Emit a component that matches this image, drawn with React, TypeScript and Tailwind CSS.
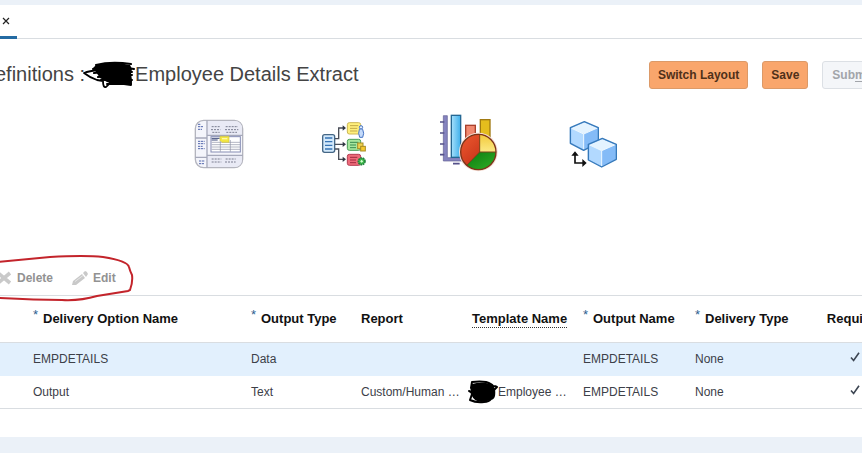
import React, { useState } from 'react';

const actions = [
  { name: 'Layout', icon: <LayoutIcon /> },
  { name: 'Hierarchy', icon: <HierarchyIcon /> },
  { name: 'Reports', icon: <ChartIcon /> },
  { name: 'Objects', icon: <CubesIcon /> },
];

const columns = [
  { name: 'Delivery Option Name', required: true, width: 'w-[218px]' },
  { name: 'Output Type', required: true, width: 'w-[110px]' },
  { name: 'Report', required: false, width: 'w-[111px]' },
  { name: 'Template Name', required: false, width: 'w-[111px]' },
  { name: 'Output Name', required: true, width: 'w-[112px]' },
  { name: 'Delivery Type', required: true, width: 'w-[112px]' },
];

const rows = [
  { option: 'EMPDETAILS', type: 'Data', report: '', template: '', output: 'EMPDETAILS', delivery: 'None' },
  { option: 'Output', type: 'Text', report: 'Custom/Human …', template: 'Employee …', output: 'EMPDETAILS', delivery: 'None' },
];

function LayoutIcon() {
  return (
    <svg viewBox="0 0 210 210" className="h-[70px] w-[70px]" aria-hidden="true">
      <rect x="31" y="31" width="142" height="142" rx="25" fill="#f4f5fb" stroke="#b4b5be" strokeWidth="4" />
      <path d="M68 33h80q23 0 23 24v17H68z" fill="#e9eaf5" />
      <path d="M68 138h103v10q0 23-23 23H68z" fill="#e9eaf5" />
      <path d="M66 31V173M31 84H66M31 142H66M66 76H173M66 136H173" stroke="#a5a8ba" strokeWidth="4" fill="none" />
      <path d="M39 43h9M39 50h15M39 58h12M39 94h20M39 101h20M39 109h14M39 116h20M42 153h18M42 161h15" stroke="#5468ad" strokeWidth="3" strokeDasharray="7 2" />
      <path d="M80 50h26M78 59h28M82 67h22M122 50h37M120 59h40M124 67h32" stroke="#7a7d90" strokeWidth="3" strokeDasharray="6 3" />
      <path d="M80 147h29M80 156h29M122 147h30M120 156h32" stroke="#7a7d90" strokeWidth="3" strokeDasharray="6 3" />
      <rect x="78" y="80" width="88" height="46" fill="#fff" stroke="#858cb4" strokeWidth="3" />
      <path d="M80 97H165M80 104H165M80 111H165M80 118H165M106 90V125M136 90V125" stroke="#8d91a4" strokeWidth="2" />
      <path d="M80 85h24M80 90h18" stroke="#3b4878" strokeWidth="3" />
      <path d="M105 79h27v18h-21l-6-6z" fill="#f3e642" stroke="#d0c545" strokeWidth="2" />
      <path d="M111 86h16" stroke="#fff9a8" strokeWidth="4" />
    </svg>
  );
}

function HierarchyIcon() {
  return (
    <svg viewBox="0 0 210 210" className="h-[70px] w-[70px]" aria-hidden="true">
      <rect x="38" y="74" width="36" height="53" rx="6" fill="#d3e9fb" stroke="#456786" strokeWidth="4" />
      <path d="M45 84h22M45 95h22M45 106h22M45 117h22" stroke="#3673b5" strokeWidth="4" />
      <path d="M75 86h11V54h15M75 103h26M75 117h11v31h15" fill="none" stroke="#4a4e58" strokeWidth="4" />
      <path d="M98 46l10 8-10 8zM98 95l10 8-10 8zM98 140l10 8-10 8z" fill="#303642" />
      <rect x="112" y="38" width="40" height="34" rx="6" fill="#fff07c" stroke="#ccb654" strokeWidth="3" />
      <path d="M120 47h25M120 55h22M120 63h22" stroke="#c2a846" strokeWidth="3" />
      <rect x="112" y="88" width="40" height="33" rx="6" fill="#a7e69e" stroke="#479e57" strokeWidth="3" />
      <path d="M120 97h25M120 105h18M120 113h18" stroke="#398b51" strokeWidth="3" />
      <rect x="112" y="133" width="40" height="33" rx="6" fill="#ee6a7a" stroke="#b53c51" strokeWidth="3" />
      <path d="M120 142h22M120 150h18M120 158h18" stroke="#a22c41" strokeWidth="3" />
      <path d="M148 58q5-5 10 0l3 12-3 12h-9l-3-12z" fill="#c4dafa" stroke="#4574c4" strokeWidth="3" />
      <circle cx="153" cy="52" r="5" fill="#e6eefb" stroke="#4574c4" strokeWidth="3" />
      <rect x="143" y="99" width="16" height="17" fill="#efd250" stroke="#a78d24" strokeWidth="3" />
      <rect x="152" y="109" width="14" height="14" fill="#f6c92e" stroke="#a78d24" strokeWidth="3" />
      <circle cx="155" cy="154" r="10" fill="#3fb84b" stroke="#21823d" strokeWidth="5" strokeDasharray="5 2" />
      <path d="M151 154h8M155 150v8" stroke="#d8ffd4" strokeWidth="3" />
    </svg>
  );
}

function ChartIcon() {
  return (
    <svg viewBox="0 0 240 225" className="h-[75px] w-20" aria-hidden="true">
      <defs>
        <linearGradient id="bar-blue">
          <stop offset="0" stopColor="#a6e0fb" />
          <stop offset="1" stopColor="#3eafeb" />
        </linearGradient>
        <linearGradient id="pie-red" x2="1" y2="1">
          <stop offset="0" stopColor="#ee5a30" />
          <stop offset="1" stopColor="#b4200e" />
        </linearGradient>
        <linearGradient id="pie-green" x2="1" y2="1">
          <stop offset="0" stopColor="#0b7a12" />
          <stop offset="1" stopColor="#30b024" />
        </linearGradient>
        <linearGradient id="pie-yellow" x2="0" y2="1">
          <stop offset="0" stopColor="#f3c93a" />
          <stop offset="1" stopColor="#fbe985" />
        </linearGradient>
      </defs>
      <path d="M40 32h12v126h44v10H40z" fill="#8583bf" stroke="#605d91" strokeWidth="2" />
      <path d="M30 51h13M30 84h13M30 117h13M30 149h13M69 176h20" stroke="#55518a" strokeWidth="5" />
      <rect x="64" y="31" width="28" height="126" fill="url(#bar-blue)" stroke="#246793" strokeWidth="4" />
      <rect x="107" y="61" width="29" height="60" fill="#f18970" stroke="#a9402c" strokeWidth="4" />
      <rect x="151" y="44" width="29" height="80" fill="#e5bd1d" stroke="#a17a12" strokeWidth="4" />
      <circle cx="145" cy="141" r="58" fill="#f5ded5" />
      <circle cx="145" cy="141" r="53" fill="url(#pie-red)" />
      <path d="M149 141V88A53 53 0 0 1 198 141z" fill="url(#pie-yellow)" />
      <path d="M149 141H198A53 53 0 0 1 110 181z" fill="url(#pie-green)" />
      <path d="M149 88v53h49M149 141l-39 40" fill="none" stroke="#7c4119" strokeWidth="3" />
      <circle cx="145" cy="141" r="53" fill="none" stroke="#7b3418" strokeWidth="4" />
    </svg>
  );
}

function Cube() {
  return (
    <>
      <path d="M0 18L42 0l42 18v45L40 86 0 65z" fill="#91c3fa" />
      <path d="M3 19L42 2l39 17-41 18z" fill="#e4f3ff" />
      <path d="M3 20l37 17v46L3 64z" fill="#b2d9ff" />
      <path d="M40 37l41-18v43L40 83z" fill="#84bbf7" />
      <path d="M4 20l36 17 41-18M40 37v46" fill="none" stroke="#f0f9ff" strokeWidth="3" />
      <path d="M0 18L42 0l42 18v45L40 86 0 65z" fill="none" stroke="#3679ba" strokeWidth="4" strokeLinejoin="round" />
    </>
  );
}

function CubesIcon() {
  return (
    <svg viewBox="0 0 210 210" className="h-[70px] w-[70px]" aria-hidden="true">
      <g transform="translate(31 35)"><Cube /></g>
      <g transform="translate(85 85)"><Cube /></g>
      <path d="M45 133v26h25" fill="none" stroke="#111" strokeWidth="5" />
      <path d="M34 137l11-13 11 13zM67 147l13 12-13 12z" fill="#111" />
    </svg>
  );
}

const CheckIcon = () => (
  <svg viewBox="0 0 10 10" className="mx-auto mb-1 h-[10px] w-[10px]" role="img" aria-label="Yes">
    <path d="M1 5.5L3.6 8.5 9 .8" fill="none" stroke="#3c4552" strokeWidth="1.6" />
  </svg>
);

const TitleScribble = () => (
  <svg viewBox="0 0 54 28" className="-ml-1 h-7 w-[54px] shrink-0" aria-hidden="true">
    <path d="M15 5q10-3 23-2l11 2 2 4-1 5 1 6-1 4H34l-8-2-7-4-4-6-3-4z" fill="#000" />
    <path d="M18 10Q8 11 3 13q5 4 13 7l6 1q0 7 3 6 3-2 4-5l21 3v-5" fill="none" stroke="#000" strokeWidth="1.8" strokeLinejoin="round" />
    <path
      d="M15 5Q30 1 50 4M12 9q20-4 41 0M13 13q20-3 38-1M17 17q18-3 34-2M20 20q15-1 31 0M26 24h24"
      fill="none"
      stroke="#000"
      strokeWidth="2"
      strokeLinecap="round"
    />
  </svg>
);

const CellScribble = () => (
  <svg viewBox="0 0 30 24" className="-ml-1 h-6 w-[30px] shrink-0" aria-hidden="true">
    <path d="M4 4q7-2 14-1 7 1 9 6 1 6-2 9-5 4-12 4-7-1-9-6-3-6 0-12z" fill="#000" />
    <path
      d="M3 8l1-6q8-1 14 0 6 2 7 4 3 0 4 1l-3 3M1 11q3 1 3 3l-2 6q6 3 14 2 5 0 7-3 4-1 3-7"
      fill="none"
      stroke="#000"
      strokeWidth="2"
      strokeLinecap="round"
      strokeLinejoin="round"
    />
  </svg>
);

const App = () => {
  const [selected, setSelected] = useState(0);

  return (
    <div className="overflow-hidden bg-[#ebf1f8] pt-[5px] font-['Liberation_Sans',Arial,sans-serif] text-xs text-[#3c4048]">
      <div className="min-w-[911px] bg-white">
        {/* Tab strip */}
        <div className="flex h-[34px] border-b border-[#d9dde1]">
          <button aria-label="Close tab" className="-mb-px w-[17px] border-b-[3px] border-[#246ba3] pl-[2px]">
            <svg viewBox="0 0 8 8" className="h-2 w-2" aria-hidden="true">
              <path d="M1 1l6 6M7 1L1 7" stroke="#222" strokeWidth="1.2" />
            </svg>
          </button>
        </div>

        {/* Title and page buttons */}
        <header className="flex items-start justify-between pt-[21px] pr-7">
          <h1 className="-ml-[5px] flex items-center text-xl leading-7 whitespace-nowrap text-[#444]">
            <span>efinitions :</span>
            <TitleScribble />
            <span>Employee Details Extract</span>
          </h1>
          <div className="flex gap-[14px] pt-px font-bold">
            <button className="h-7 rounded-[3px] border border-[#dc9a68] bg-[#f9a66c] px-2 text-[#4f3019]">
              Switch Layout
            </button>
            <button className="h-7 rounded-[3px] border border-[#dc9a68] bg-[#f9a66c] px-2 text-[#4f3019]">
              Save
            </button>
            <button disabled className="h-7 rounded-[3px] border border-[#dce0e5] bg-[#f4f6f9] px-[9px] text-[#a2a5aa]">
              Sub<span className="underline underline-offset-2">m</span>it
            </button>
          </div>
        </header>

        {/* Shortcuts */}
        <nav className="mt-4 flex items-end pl-[157px]">
          {actions.map((action) => (
            <a key={action.name} href="#" aria-label={action.name} className="flex w-[125px] justify-center">
              {action.icon}
            </a>
          ))}
        </nav>

        {/* Table toolbar */}
        <div className="relative mt-20 flex h-[35px] items-center font-bold text-[#929292]">
          <button disabled className="flex items-center gap-[5px]">
            <svg viewBox="0 0 12 14" className="h-[14px] w-3" aria-hidden="true">
              <path d="M-2 2L10 12M-2 12L10 2" stroke="#c9c9c9" strokeWidth="3.6" />
            </svg>
            Delete
          </button>
          <button disabled className="ml-[18px] flex items-center gap-1">
            <svg viewBox="0 0 18 18" className="h-[18px] w-[18px]" aria-hidden="true">
              <path d="M1 16l1-4 9-7 3 4-9 7zM12 4l2-2q2 0 3 3l-2 3z" fill="#c9c9c9" />
              <path d="M4 12.5l8-6" stroke="#e6e6e6" strokeWidth="1" />
            </svg>
            Edit
          </button>
          <svg viewBox="0 0 140 50" className="pointer-events-none absolute -top-2 left-0 h-[50px] w-[140px]" aria-hidden="true">
            <path
              d="M-2 10L50 5Q85 3 103 5Q128 9 129 15Q130 19 132 23Q133 30 130 38L128 39L97 44Q80 49 62 48Q35 48-2 46"
              fill="none"
              stroke="#c3242b"
              strokeWidth="2"
            />
          </svg>
        </div>

        <table className="w-full table-fixed border-collapse text-left whitespace-nowrap">
          <thead>
            <tr className="h-[47px] border-y border-[#d9dde1] text-[13px] text-[#111]">
              <th className="w-[25px]" aria-label="Select"></th>
              {columns.map((column) => (
                <th key={column.name} className={`px-2 ${column.width}`}>
                  <span className="flex items-center">
                    {column.required && <span className="w-[10px] pb-2 font-normal text-[#2b618f]">*</span>}
                    <span className={column.name === 'Template Name' ? 'border-b border-dotted border-[#333]' : 'border-b border-transparent'}>
                      {column.name}
                    </span>
                  </span>
                </th>
              ))}
              <th className="text-center">Required</th>
            </tr>
          </thead>
          <tbody>
            {rows.map((row, index) => (
              <tr
                key={row.option}
                onClick={() => setSelected(index)}
                className={index === selected ? 'h-[33px] bg-[#e2f0fd]' : 'h-[33px] border-b border-[#d9dde1]'}
              >
                <td></td>
                <td className="px-2">{row.option}</td>
                <td className="px-2">{row.type}</td>
                <td className="px-2">{row.report}</td>
                <td className="px-2">
                  {row.template && (
                    <span className="flex items-center">
                      <CellScribble />
                      {row.template}
                    </span>
                  )}
                </td>
                <td className="px-2">{row.output}</td>
                <td className="px-2">{row.delivery}</td>
                <td><CheckIcon /></td>
              </tr>
            ))}
          </tbody>
        </table>
        <div className="h-7"></div>
      </div>
      <footer className="h-4"></footer>
    </div>
  );
};

export default App;
